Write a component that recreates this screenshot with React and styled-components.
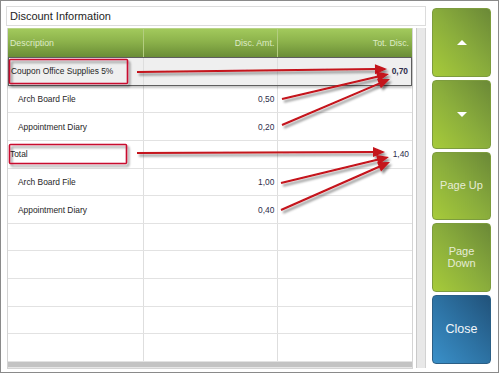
import React from "react";
import styled, { createGlobalStyle } from "styled-components";

const GlobalStyle = createGlobalStyle`
  html, body {
    margin: 0;
    padding: 0;
    background: #ffffff;
  }
  * {
    box-sizing: border-box;
  }
`;

const Frame = styled.div`
  position: relative;
  width: 499px;
  height: 373px;
  border: 1px solid #8a8a8a;
  background: #ffffff;
  padding: 5px 6px 3px 5px;
  display: flex;
  font-family: "Liberation Sans", Arial, sans-serif;
`;

const LeftPane = styled.div`
  width: 420px;
  display: flex;
  flex-direction: column;
  gap: 2px;
`;

const TitleBar = styled.div`
  height: 20px;
  border: 1px solid #dcdcdc;
  padding-left: 3px;
  display: flex;
  align-items: center;
  font-size: 11px;
  color: #1e1e1e;
`;

const GridArea = styled.div`
  flex: 1;
  display: flex;
  gap: 2px;
  padding-left: 1px;
`;

const Grid = styled.div`
  width: 406px;
  display: flex;
  flex-direction: column;
  border: 1px solid #d4d4d4;
  border-top: none;
`;

const HeaderRow = styled.div`
  height: 29px;
  display: grid;
  grid-template-columns: repeat(3, 1fr);
  background: linear-gradient(to bottom, #a2c95c 0%, #8cb24b 45%, #6a8d36 100%);
  border-top: 1px solid #b9d487;
`;

const HeaderCell = styled.div`
  display: flex;
  align-items: center;
  justify-content: ${(p) => (p.$right ? "flex-end" : "flex-start")};
  padding: 0 3px 0 2px;
  font-size: 8.8px;
  color: #deebc6;
  border-left: ${(p) => (p.$first ? "none" : "1px solid #b3cd80")};
`;

const Body = styled.div`
  height: 305px;
  display: flex;
  flex-direction: column;
`;

const Row = styled.div`
  flex: 1;
  display: grid;
  grid-template-columns: repeat(3, 1fr);
  border-bottom: 1px solid #e2e2e2;
  background: ${(p) => (p.$selected ? "#efefef" : "#ffffff")};
  ${(p) =>
    p.$selected &&
    `
    border: 1px solid #5e5e5e;
    box-shadow: 0 2px 2px rgba(0,0,0,0.22);
    position: relative;
  `}
`;

const Cell = styled.div`
  display: flex;
  align-items: center;
  justify-content: ${(p) => (p.$right ? "flex-end" : "flex-start")};
  padding: 0 3px 0 ${(p) => (p.$indent ? "10px" : "2px")};
  font-size: 8.4px;
  color: ${(p) => (p.$num ? "#2d2d4a" : "#262626")};
  font-weight: ${(p) => (p.$bold ? "bold" : "normal")};
  border-left: ${(p) => (p.$first ? "none" : "1px solid #dedede")};
`;

const HScroll = styled.div`
  height: 6px;
  background: #c3c3c3;
  border-bottom: 1px solid #e6e6e6;
`;

const VScroll = styled.div`
  width: 10px;
  margin-left: 1px;
  background: #e8e8e8;
  border-left: 1px solid #c9c9c9;
  border-right: 1px solid #d2d2d2;
  margin-bottom: 1px;
`;

const RightPane = styled.div`
  margin-left: 6px;
  width: 59px;
  padding: 2px 0 5px;
  display: flex;
  flex-direction: column;
  gap: 3px;
`;

const SideButton = styled.button`
  flex: 1;
  border-radius: 4px;
  border: 1px solid ${(p) => (p.$blue ? "#2b5f86" : "#7d9c3e")};
  background: ${(p) =>
    p.$blue
      ? "linear-gradient(to top right, #3a90c9 0%, #2d72a3 50%, #21527a 100%)"
      : "linear-gradient(to top right, #a7cb3a 0%, #8aad3c 50%, #6b8937 100%)"};
  color: ${(p) => (p.$blue ? "#f2f6fa" : "#e6ecd6")};
  font-family: "Liberation Sans", Arial, sans-serif;
  font-size: ${(p) => (p.$big ? "12.5px" : "11px")};
  line-height: 1.05;
  display: flex;
  align-items: center;
  justify-content: center;
  text-align: center;
  padding: 0;
  cursor: pointer;
`;

const Triangle = styled.span`
  width: 0;
  height: 0;
  border-left: 5px solid transparent;
  border-right: 5px solid transparent;
  ${(p) =>
    p.$down
      ? "border-top: 5px solid #ffffff;"
      : "border-bottom: 5px solid #ffffff;"}
`;

const Overlay = styled.svg`
  position: absolute;
  left: -1px;
  top: -1px;
  pointer-events: none;
`;

const rows = [
  { desc: "Coupon Office Supplies 5%", amt: "", tot: "0,70", selected: true },
  { desc: "Arch Board File", amt: "0,50", tot: "", indent: true },
  { desc: "Appointment Diary", amt: "0,20", tot: "", indent: true },
  { desc: "Total", amt: "", tot: "1,40" },
  { desc: "Arch Board File", amt: "1,00", tot: "", indent: true },
  { desc: "Appointment Diary", amt: "0,40", tot: "", indent: true },
  {}, {}, {}, {}, {},
];

const arrows = [
  [137, 72, 387, 69],
  [282, 99, 389, 74],
  [282, 125, 390, 79],
  [137, 153, 385, 152],
  [281, 183, 389, 157],
  [281, 210, 390, 162],
];

function Arrow({ x1, y1, x2, y2 }) {
  const dx = x2 - x1;
  const dy = y2 - y1;
  const len = Math.hypot(dx, dy);
  const ux = dx / len;
  const uy = dy / len;
  const hl = 12;
  const hw = 5;
  const bx = x2 - ux * hl;
  const by = y2 - uy * hl;
  const pts = `${x2},${y2} ${bx - uy * hw},${by + ux * hw} ${bx + uy * hw},${by - ux * hw}`;
  return (
    <g>
      <line x1={x1} y1={y1} x2={bx + ux * 2} y2={by + uy * 2} stroke="#c4121a" strokeWidth="2" />
      <polygon points={pts} fill="#c4121a" />
    </g>
  );
}

export default function App() {
  return (
    <>
      <GlobalStyle />
      <Frame>
        <LeftPane>
          <TitleBar>Discount Information</TitleBar>
          <GridArea>
            <Grid>
              <HeaderRow>
                <HeaderCell $first>Description</HeaderCell>
                <HeaderCell $right>Disc. Amt.</HeaderCell>
                <HeaderCell $right>Tot. Disc.</HeaderCell>
              </HeaderRow>
              <Body>
                {rows.map((r, i) => (
                  <Row key={i} $selected={r.selected}>
                    <Cell $first $indent={r.indent}>{r.desc}</Cell>
                    <Cell $right $num>{r.amt}</Cell>
                    <Cell $right $num $bold={r.selected}>{r.tot}</Cell>
                  </Row>
                ))}
              </Body>
              <HScroll />
            </Grid>
            <VScroll />
          </GridArea>
        </LeftPane>
        <RightPane>
          <SideButton><Triangle /></SideButton>
          <SideButton><Triangle $down /></SideButton>
          <SideButton>Page Up</SideButton>
          <SideButton>Page<br />Down</SideButton>
          <SideButton $blue $big>Close</SideButton>
        </RightPane>
        <Overlay width="500" height="375" viewBox="0 0 500 375">
          <defs>
            <filter id="shadow" x="-20%" y="-50%" width="140%" height="200%">
              <feDropShadow dx="2" dy="2.5" stdDeviation="1.3" floodColor="#000" floodOpacity="0.45" />
            </filter>
          </defs>
          <g filter="url(#shadow)">
            <rect x="9.5" y="59.5" width="118" height="24" rx="1" fill="none" stroke="#c8102e" strokeWidth="1.6" />
            <rect x="9.5" y="144.5" width="117" height="19" rx="1" fill="none" stroke="#c8102e" strokeWidth="1.6" />
            {arrows.map(([x1, y1, x2, y2], i) => (
              <Arrow key={i} x1={x1} y1={y1} x2={x2} y2={y2} />
            ))}
          </g>
        </Overlay>
      </Frame>
    </>
  );
}
